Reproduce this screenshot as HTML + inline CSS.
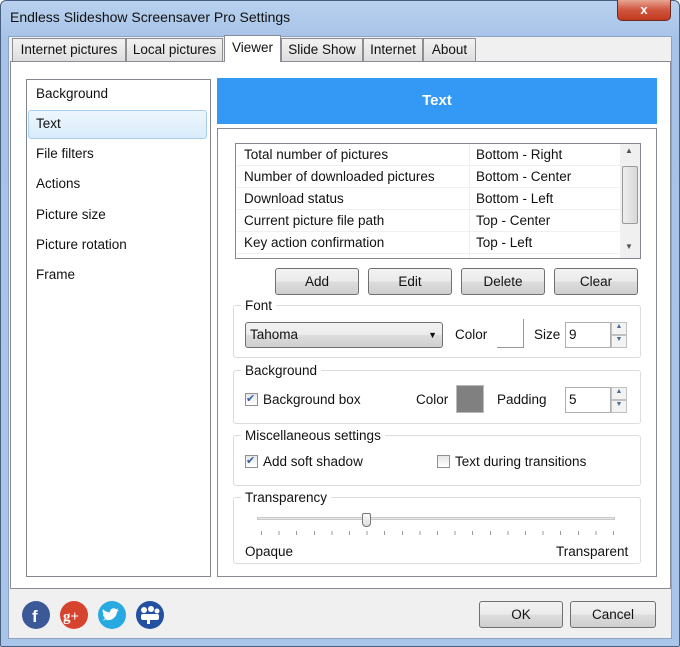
<!DOCTYPE html>
<html><head><meta charset="utf-8"><style>
*{box-sizing:border-box;margin:0;padding:0}
body{width:680px;height:647px;overflow:hidden;font-family:"Liberation Sans",sans-serif;font-size:13.5px;color:#111;background:#fff}
.a{position:absolute}
.win{left:0;top:0;width:680px;height:647px;background:linear-gradient(#b9d1ee,#a6c2e8 40px,#aac5ea);border:1px solid #48607f;border-radius:6px 6px 2px 2px}
.client{left:8px;top:36px;width:664px;height:603px;background:#f0f0f0;border:1px solid #8ea3bf}
.tab{top:38px;height:23px;background:linear-gradient(#f2f2f2,#dedede);border:1px solid #8c8e94;border-bottom:none;padding:3px 0 0 0;text-align:center}
.btn{height:27px;border:1px solid #707070;border-radius:3px;background:linear-gradient(#f2f2f2 0,#ebebeb 50%,#dddddd 51%,#cfcfcf);text-align:center;line-height:25px}
.grp{border:1px solid #dcdcdc;border-radius:3px}
.lbl{background:#fff;padding:0 4px}
.row{left:237px;width:383px;height:22px;border-bottom:1px solid #f0f0f0}
.row span{position:absolute;top:3px}
.cb{width:13px;height:13px;border:1px solid #8f8f8f;background:linear-gradient(#e6e6e6,#fff)}
.inp{border:1px solid #abadb3;background:#fff;padding:4px 0 0 3px}
.spin{width:16px;border:1px solid #c0c0c0;background:#f3f3f3;font-size:7px;color:#4a6d9c;text-align:center}
</style></head><body>
<div class="a win"></div>
<div class="a" style="left:10px;top:9px;font-size:14px;color:#111">Endless Slideshow Screensaver Pro Settings</div>
<div class="a" style="left:617px;top:0;width:54px;height:21px;border:1px solid #6b2a20;border-top:none;border-radius:0 0 5px 5px;background:linear-gradient(#e8a593,#d0553d 50%,#c23a20);color:#fff;font-weight:bold;text-align:center;font-size:13px;line-height:19px">x</div>
<div class="a client"></div>
<div class="a tab" style="left:12px;width:114px">Internet pictures</div>
<div class="a tab" style="left:126px;width:97px">Local pictures</div>
<div class="a tab" style="left:281px;width:82px">Slide Show</div>
<div class="a tab" style="left:363px;width:60px">Internet</div>
<div class="a tab" style="left:423px;width:53px">About</div>
<div class="a" style="left:10px;top:61px;width:661px;height:528px;background:#fff;border:1px solid #898c95"></div>
<div class="a" style="left:224px;top:35px;width:57px;height:27px;background:#fff;border:1px solid #898c95;border-bottom:none;text-align:center;padding-top:4px">Viewer</div>
<!-- left list -->
<div class="a" style="left:26px;top:79px;width:185px;height:498px;border:1px solid #828790"></div>
<div class="a" style="left:28px;top:110px;width:179px;height:29px;border:1px solid #a8d0ee;border-radius:3px;background:linear-gradient(#eef6fd,#d9ecfc)"></div>
<div class="a" style="left:36px;top:86px">Background</div>
<div class="a" style="left:36px;top:116px">Text</div>
<div class="a" style="left:36px;top:146px">File filters</div>
<div class="a" style="left:36px;top:176px">Actions</div>
<div class="a" style="left:36px;top:207px">Picture size</div>
<div class="a" style="left:36px;top:237px">Picture rotation</div>
<div class="a" style="left:36px;top:267px">Frame</div>
<!-- header -->
<div class="a" style="left:217px;top:78px;width:440px;height:46px;background:#3399f5;color:#fff;font-weight:bold;font-size:15px;text-align:center;line-height:46px">Text</div>
<div class="a" style="left:217px;top:128px;width:440px;height:449px;border:1px solid #898c95"></div>
<!-- list view -->
<div class="a" style="left:235px;top:143px;width:406px;height:116px;border:1px solid #828790"></div>
<div class="a" style="left:469px;top:144px;width:1px;height:114px;background:#f0f0f0"></div>
<div class="a row" style="top:144px"><span style="left:7px">Total number of pictures</span><span style="left:239px">Bottom - Right</span></div>
<div class="a row" style="top:166px"><span style="left:7px">Number of downloaded pictures</span><span style="left:239px">Bottom - Center</span></div>
<div class="a row" style="top:188px"><span style="left:7px">Download status</span><span style="left:239px">Bottom - Left</span></div>
<div class="a row" style="top:210px"><span style="left:7px">Current picture file path</span><span style="left:239px">Top - Center</span></div>
<div class="a row" style="top:232px"><span style="left:7px">Key action confirmation</span><span style="left:239px">Top - Left</span></div>
<div class="a" style="left:620px;top:144px;width:20px;height:114px;background:#f0f0f0"></div>
<div class="a" style="left:622px;top:166px;width:16px;height:58px;border:1px solid #9a9a9a;border-radius:2px;background:linear-gradient(90deg,#eee,#d8d8d8)"></div>
<div class="a" style="left:625px;top:146px;font-size:8px;color:#555">▲</div>
<div class="a" style="left:625px;top:242px;font-size:8px;color:#555">▼</div>
<!-- buttons -->
<div class="a btn" style="left:275px;top:268px;width:84px">Add</div>
<div class="a btn" style="left:368px;top:268px;width:84px">Edit</div>
<div class="a btn" style="left:461px;top:268px;width:84px">Delete</div>
<div class="a btn" style="left:554px;top:268px;width:84px">Clear</div>
<!-- font group -->
<div class="a grp" style="left:233px;top:305px;width:408px;height:53px"></div>
<div class="a lbl" style="left:241px;top:298px">Font</div>
<div class="a btn" style="left:245px;top:322px;width:198px;height:26px;text-align:left;padding-left:4px;line-height:24px">Tahoma<span style="position:absolute;right:5px;font-size:9px">▼</span></div>
<div class="a" style="left:455px;top:327px">Color</div>
<div class="a" style="left:497px;top:319px;width:27px;height:29px;border-right:1px solid #999;border-bottom:1px solid #999"></div>
<div class="a" style="left:534px;top:327px">Size</div>
<div class="a inp" style="left:565px;top:322px;width:46px;height:26px">9</div>
<div class="a spin" style="left:611px;top:322px;height:13px">▲</div>
<div class="a spin" style="left:611px;top:335px;height:13px">▼</div>
<!-- background group -->
<div class="a grp" style="left:233px;top:370px;width:408px;height:54px"></div>
<div class="a lbl" style="left:241px;top:363px">Background</div>
<div class="a cb" style="left:245px;top:393px;font-size:11px;line-height:11px;color:#3a5ea0">✔</div>
<div class="a" style="left:263px;top:392px">Background box</div>
<div class="a" style="left:416px;top:392px">Color</div>
<div class="a" style="left:456px;top:385px;width:28px;height:28px;background:#808080;border:1px solid #bbb"></div>
<div class="a" style="left:497px;top:392px">Padding</div>
<div class="a inp" style="left:565px;top:387px;width:46px;height:26px">5</div>
<div class="a spin" style="left:611px;top:387px;height:13px">▲</div>
<div class="a spin" style="left:611px;top:400px;height:13px">▼</div>
<!-- misc -->
<div class="a grp" style="left:233px;top:435px;width:408px;height:51px"></div>
<div class="a lbl" style="left:241px;top:428px">Miscellaneous settings</div>
<div class="a cb" style="left:245px;top:455px;font-size:11px;line-height:11px;color:#3a5ea0">✔</div>
<div class="a" style="left:263px;top:454px">Add soft shadow</div>
<div class="a cb" style="left:437px;top:455px"></div>
<div class="a" style="left:455px;top:454px">Text during transitions</div>
<!-- transparency -->
<div class="a grp" style="left:233px;top:497px;width:408px;height:67px"></div>
<div class="a lbl" style="left:241px;top:490px">Transparency</div>
<div class="a" style="left:257px;top:517px;width:358px;height:3px;border:1px solid #c8c8c8;background:#e8e8e8"></div>
<div class="a" style="left:362px;top:513px;width:9px;height:14px;border:1px solid #777;border-radius:2px 2px 4px 4px;background:linear-gradient(#fafafa,#ddd)"></div>
<div class="a" style="left:261px;top:531px;width:354px;height:4px;background:repeating-linear-gradient(90deg,#999 0 1px,transparent 1px 17.6px)"></div>
<div class="a" style="left:245px;top:544px">Opaque</div>
<div class="a" style="left:556px;top:544px">Transparent</div>
<!-- bottom -->
<svg class="a" style="left:20px;top:600px" width="150" height="30">
<circle cx="16" cy="15" r="14" fill="#3b5998"/><text x="12" y="22" fill="#fff" font-family="Liberation Sans" font-weight="bold" font-size="17">f</text>
<circle cx="54" cy="15" r="14" fill="#d6442f"/><text x="43" y="21" fill="#fff" font-family="Liberation Serif" font-weight="bold" font-size="15">g+</text>
<circle cx="92" cy="15" r="14" fill="#28a9e1"/><path d="M84 19c5 3 12 0 13-7l2-2-2 .3 1-2-2 1c-2-2-6-1-6 3-3 0-5-1-7-3-1 2 0 4 1 5h-1c0 2 1 3 3 3h-2c1 2 2 2 3 2-1 1-3 1-4 1z" fill="#fff"/>
<circle cx="130" cy="15" r="14" fill="#2350a0"/><circle cx="124" cy="10" r="3" fill="#fff"/><circle cx="131" cy="9" r="3" fill="#fff"/><circle cx="137" cy="11" r="2.5" fill="#fff"/><rect x="121" y="14" width="18" height="6" rx="2" fill="#fff"/><rect x="127" y="19" width="3" height="5" fill="#fff"/>
</svg>
<div class="a btn" style="left:479px;top:601px;width:84px">OK</div>
<div class="a btn" style="left:570px;top:601px;width:86px">Cancel</div>
</body></html>
